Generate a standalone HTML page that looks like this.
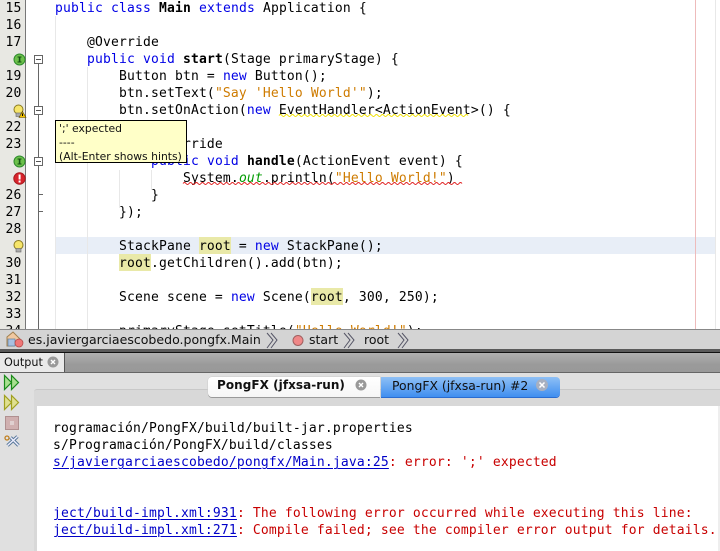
<!DOCTYPE html>
<html><head><meta charset="utf-8"><style>
html,body{margin:0;padding:0}
body{width:720px;height:551px;overflow:hidden;position:relative;background:#fff;font-family:"DejaVu Sans Mono","Liberation Mono",monospace}
.a{position:absolute}
.l{position:absolute;left:55px;height:17px;line-height:17px;font-size:13px;letter-spacing:.17px;white-space:pre;color:#000}
.n{position:absolute;left:0;width:21.5px;text-align:right;height:17px;line-height:17px;font-size:13px;letter-spacing:.17px;color:#000}
.k{color:#0000e6}.s{color:#ce7b00}.b{font-weight:bold}
.hl{position:absolute;background:#e9e9a8;height:17px;width:32px}
.o{position:absolute;left:53px;height:17px;line-height:17px;font-size:13px;letter-spacing:.17px;white-space:pre;color:#000}
.u{color:#0000c8;text-decoration:underline;text-underline-offset:2px;text-decoration-thickness:1px}.r{color:#c80000}
.g{position:absolute;width:1px;background:#e8e8e8}
.f{position:absolute;left:34px;width:7px;height:7px;border:1px solid #666;background:#fff}
.f:after{content:"";position:absolute;left:1px;top:3px;width:5px;height:1px;background:#555}
.t{position:absolute;font-family:"DejaVu Sans",sans-serif;white-space:pre}
</style></head><body>
<div class="a" style="left:0;top:0;width:25px;height:330px;background:#e8e8e3"></div>
<div class="a" style="left:25px;top:0;width:1px;height:330px;background:#777"></div>
<div class="a" style="left:55px;top:237px;width:660px;height:17px;background:#e8eef7"></div>
<div class="a" style="left:695px;top:0;width:1px;height:330px;background:#eebbbb"></div>
<div class="a" style="left:715px;top:0;width:1px;height:330px;background:#e8e8e8"></div>
<div class="g" style="left:55px;top:16px;height:314px"></div>
<div class="g" style="left:87px;top:67px;height:263px"></div>
<div class="g" style="left:119px;top:170px;height:38px"></div>
<div class="g" style="left:151px;top:170px;height:20px"></div>
<div class="a" style="left:38px;top:63px;width:1px;height:267px;background:#666"></div>
<div class="a" style="left:39px;top:194px;width:4px;height:1px;background:#666"></div>
<div class="a" style="left:39px;top:211px;width:4px;height:1px;background:#666"></div>
<div class="f" style="top:55px"></div><div class="f" style="top:106px"></div><div class="f" style="top:157px"></div>

<div class="n" style="top:0">15</div><div class="n" style="top:17px">16</div><div class="n" style="top:34px">17</div>
<div class="n" style="top:68px">19</div><div class="n" style="top:85px">20</div><div class="n" style="top:119px">22</div>
<div class="n" style="top:136px">23</div><div class="n" style="top:187px">26</div><div class="n" style="top:204px">27</div>
<div class="n" style="top:221px">28</div><div class="n" style="top:255px">30</div><div class="n" style="top:272px">31</div>
<div class="n" style="top:289px">32</div><div class="n" style="top:306px">33</div><div class="n" style="top:323px">34</div>

<svg class="a" style="left:0;top:0" width="30" height="260">
<g><circle cx="19.5" cy="59.5" r="5.5" fill="#6cc04a" stroke="#2e8b2e"/><rect x="18.8" y="56.5" width="1.6" height="6" fill="#145214"/><rect x="17.5" y="56.5" width="4" height="1" fill="#145214"/><rect x="17.5" y="61.5" width="4" height="1" fill="#145214"/></g>
<g><circle cx="19.5" cy="161.5" r="5.5" fill="#6cc04a" stroke="#2e8b2e"/><rect x="18.8" y="158.5" width="1.6" height="6" fill="#145214"/><rect x="17.5" y="158.5" width="4" height="1" fill="#145214"/><rect x="17.5" y="163.5" width="4" height="1" fill="#145214"/></g>
<circle cx="19.5" cy="178.5" r="5.7" fill="#d8242c" stroke="#a81c20"/><rect x="18.6" y="174.5" width="2" height="5" fill="#fff"/><rect x="18.6" y="180.500" width="2" height="2" fill="#fff"/>
<g><circle cx="18.500" cy="109.500" r="4.500" fill="#f6e56a" stroke="#8a7a20"/><rect x="16" y="113" width="5" height="3.500" fill="#aaa" stroke="#666" stroke-width=".6"/><path d="M22.500 111.500l3.500 6h-7z" fill="#f5c400" stroke="#554400" stroke-width=".6"/><rect x="22" y="113.500" width="1" height="2.500" fill="#000"/></g>
<g><circle cx="18.500" cy="245" r="4.500" fill="#f6e56a" stroke="#8a7a20"/><rect x="16" y="248.500" width="5" height="3.500" fill="#aaa" stroke="#666" stroke-width=".6"/></g>
</svg>

<div class="hl" style="left:199px;top:237px"></div>
<div class="hl" style="left:119px;top:254px"></div>
<div class="hl" style="left:311px;top:288px"></div>

<div class="l" style="top:0"><span class="k">public class </span><span class="b">Main</span> <span class="k">extends</span> Application {</div>
<div class="l" style="top:34px">    @Override</div>
<div class="l" style="top:51px">    <span class="k">public void </span><span class="b">start</span>(Stage primaryStage) {</div>
<div class="l" style="top:68px">        Button btn = <span class="k">new</span> Button();</div>
<div class="l" style="top:85px">        btn.setText(<span class="s">"Say 'Hello World'"</span>);</div>
<div class="l" style="top:102px">        btn.setOnAction(<span class="k">new</span> EventHandler&lt;ActionEvent&gt;() {</div>
<div class="l" style="top:136px">            @Override</div>
<div class="l" style="top:153px">            <span class="k">public void </span><span class="b">handle</span>(ActionEvent event) {</div>
<div class="l" style="top:170px">                System.<span style="color:#009b00;font-style:italic">out</span>.println(<span class="s">"Hello World!"</span>)</div>
<div class="l" style="top:187px">            }</div>
<div class="l" style="top:204px">        });</div>
<div class="l" style="top:238px">        StackPane root = <span class="k">new</span> StackPane();</div>
<div class="l" style="top:255px">        root.getChildren().add(btn);</div>
<div class="l" style="top:289px">        Scene scene = <span class="k">new</span> Scene(root, 300, 250);</div>
<div class="l" style="top:323px">        primaryStage.setTitle(<span class="s">"Hello World!"</span>);</div>
<svg class="a" style="left:0;top:0" width="720" height="330">
<path d="M279 115.500 q1.500 -2 3 0 t3 0 t3 0 t3 0 t3 0 t3 0 t3 0 t3 0 t3 0 t3 0 t3 0 t3 0 t3 0 t3 0 t3 0 t3 0 t3 0 t3 0 t3 0 t3 0 t3 0 t3 0 t3 0 t3 0 t3 0 t3 0 t3 0 t3 0 t3 0 t3 0 t3 0 t3 0 t3 0 t3 0 t3 0 t3 0 t3 0 t3 0 t3 0 t3 0 t3 0 t3 0 t3 0 t3 0 t3 0 t3 0 t3 0 t3 0 t3 0 t3 0 t3 0 t3 0 t3 0 t3 0 t3 0 t3 0 t3 0 t3 0 t3 0 t3 0 t3 0 t3 0 t3 0" fill="none" stroke="#f0e000" stroke-width="1"/>
<path d="M183 183.500 q1.500 -2 3 0 t3 0 t3 0 t3 0 t3 0 t3 0 t3 0 t3 0 t3 0 t3 0 t3 0 t3 0 t3 0 t3 0 t3 0 t3 0 t3 0 t3 0 t3 0 t3 0 t3 0 t3 0 t3 0 t3 0 t3 0 t3 0 t3 0 t3 0 t3 0 t3 0 t3 0 t3 0 t3 0 t3 0 t3 0 t3 0 t3 0 t3 0 t3 0 t3 0 t3 0 t3 0 t3 0 t3 0 t3 0 t3 0 t3 0 t3 0 t3 0 t3 0 t3 0 t3 0 t3 0 t3 0 t3 0 t3 0 t3 0 t3 0 t3 0 t3 0 t3 0 t3 0 t3 0 t3 0 t3 0 t3 0 t3 0 t3 0 t3 0 t3 0 t3 0 t3 0 t3 0 t3 0 t3 0 t3 0 t3 0 t3 0 t3 0 t3 0 t3 0 t3 0 t3 0 t3 0 t3 0 t3 0 t3 0 t3 0 t3 0 t3 0 t3 0 t3 0 t3 0" fill="none" stroke="#e02020" stroke-width="1"/>
</svg>

<div class="a" style="left:55px;top:120px;width:130px;height:41px;background:#ffffc8;border:1px solid #000;font-family:'DejaVu Sans',sans-serif;font-size:10.8px;line-height:14px;color:#111;white-space:pre;padding:0"><div style="padding:1px 0 0 3px">';' expected
----
(Alt-Enter shows hints)</div></div>

<div class="a" style="left:0;top:329px;width:720px;height:1px;background:#888"></div>
<div class="a" style="left:0;top:330px;width:720px;height:19px;background:#d4d4d4"></div>
<div class="a" style="left:0;top:349px;width:720px;height:3px;background:#5a5a5a"></div>
<div class="a" style="left:0;top:352px;width:720px;height:1px;background:#111"></div>
<div class="a" style="left:0;top:353px;width:720px;height:19px;background:linear-gradient(#b0b0b0,#9a9a9a 60%,#999)"></div>
<div class="a" style="left:0;top:372px;width:720px;height:1px;background:#666"></div>
<div class="a" style="left:0;top:373px;width:720px;height:178px;background:#e0e0e0"></div>
<div class="a" style="left:34px;top:389px;width:686px;height:17px;background:#d8d8d8;border-top:1px solid #c8c8c8;border-radius:3px 0 0 0"></div>
<div class="a" style="left:34px;top:406px;width:3px;height:145px;background:#d8d8d8"></div>
<div class="a" style="left:37px;top:406px;width:681px;height:145px;background:#fff"></div>
<div class="a" style="left:718px;top:406px;width:2px;height:145px;background:#eee"></div>

<svg class="a" style="left:0;top:330px" width="26" height="20">
<path d="M13 2l7 7-6 7H7V7z" fill="#f0c8a0" stroke="#a08050"/><rect x="8" y="9" width="7" height="7" fill="#a8c0e0" stroke="#6080a0" stroke-width=".7"/><circle cx="19" cy="13" r="4" fill="#ee7777" stroke="#b04444" stroke-width=".7"/>
</svg>
<div class="t" style="left:28px;top:330px;font-size:12.55px;line-height:19px;color:#111">es.javiergarciaescobedo.pongfx.Main</div>
<svg class="a" style="left:262px;top:331px" width="150" height="18" fill="none" stroke="#556" stroke-width="1.5">
<path d="M5 2l6 7-6 8M9 2l6 7-6 8" stroke-width="1"/>
<path d="M82 2l6 7-6 8M86 2l6 7-6 8" stroke-width="1"/>
<path d="M136 2l6 7-6 8M140 2l6 7-6 8" stroke-width="1"/>
<circle cx="36" cy="9.500" r="5" fill="#f08888" stroke="#a06060" stroke-width="1"/>
</svg>
<div class="t" style="left:309px;top:330px;font-size:12.5px;line-height:19px;color:#111">start</div>
<div class="t" style="left:364px;top:330px;font-size:12.5px;line-height:19px;color:#111">root</div>

<div class="a" style="left:0;top:353px;width:64px;height:19px;background:#e9e9e9;border-right:1px solid #555"></div>
<div class="t" style="left:4px;top:353px;font-size:11.2px;line-height:19px;color:#111">Output</div>
<svg class="a" style="left:46px;top:355px" width="14" height="14"><circle cx="7" cy="7" r="5.500" fill="#999"/><path d="M5 5l4 4M9 5l-4 4" stroke="#fff" stroke-width="1.400"/></svg>

<svg class="a" style="left:0;top:373px" width="30" height="80">
<path d="M4.500 2.500v14l7-7zM11.500 2.500v14l7-7z" fill="#a8e090" stroke="#1a8a1a" stroke-width="1.200"/>
<path d="M4.500 22.500v14l7-7zM11.500 22.500v14l7-7z" fill="#e0e090" stroke="#a0a020" stroke-width="1.200"/>
<rect x="5.500" y="43.500" width="13" height="13" fill="#d0b0b0" stroke="#b09090"/><rect x="10" y="48" width="4" height="4" fill="#e0d0d0"/>
<circle cx="7" cy="65" r="2" fill="none" stroke="#c08020" stroke-width="1.300"/>
<path d="M17.500 63.500l-10 9M10.500 64.500l8 8" stroke="#5a7a9a" stroke-width="3.400" fill="none"/>
<path d="M17.500 63.500l-10 9M10.500 64.500l8 8" stroke="#eef" stroke-width="1.400" fill="none"/>
</svg>

<div class="a" style="left:208px;top:377px;width:172px;height:20px;background:linear-gradient(#fff,#f6f6f6);border-radius:4px 0 0 4px;box-shadow:0 1px 0 #999,0 0 0 .5px #ccc"></div>
<div class="a" style="left:381px;top:377px;width:179px;height:20px;background:linear-gradient(#8fc0f5,#3f8ef0);border-radius:0 4px 4px 0;box-shadow:0 1px 0 #2a6cd0"></div>
<div class="t" style="left:217px;top:377px;font-size:12px;line-height:17px;font-weight:bold;color:#111;letter-spacing:.05px">PongFX (jfxsa-run)</div>
<div class="t" style="left:392px;top:377px;font-size:12.4px;line-height:17px;color:#111">PongFX (jfxsa-run) #2</div>
<svg class="a" style="left:354px;top:378px" width="14" height="14"><circle cx="7" cy="7" r="5.500" fill="#999"/><path d="M5 5l4 4M9 5l-4 4" stroke="#fff" stroke-width="1.400"/></svg>
<svg class="a" style="left:535px;top:378px" width="14" height="14"><circle cx="7" cy="7" r="6" fill="#a8b0c0"/><path d="M4.500 4.500l5 5M9.500 4.500l-5 5" stroke="#fff" stroke-width="1.500"/></svg>

<div class="o" style="top:420px">rogramación/PongFX/build/built-jar.properties</div>
<div class="o" style="top:437px">s/Programación/PongFX/build/classes</div>
<div class="o" style="top:454px"><span class="u">s/javiergarciaescobedo/pongfx/Main.java:25</span><span class="r">: error: ';' expected</span></div>
<div class="o" style="top:505px"><span class="u">ject/build-impl.xml:931</span><span class="r">: The following error occurred while executing this line:</span></div>
<div class="o" style="top:522px"><span class="u">ject/build-impl.xml:271</span><span class="r">: Compile failed; see the compiler error output for details.</span></div>
</body></html>
